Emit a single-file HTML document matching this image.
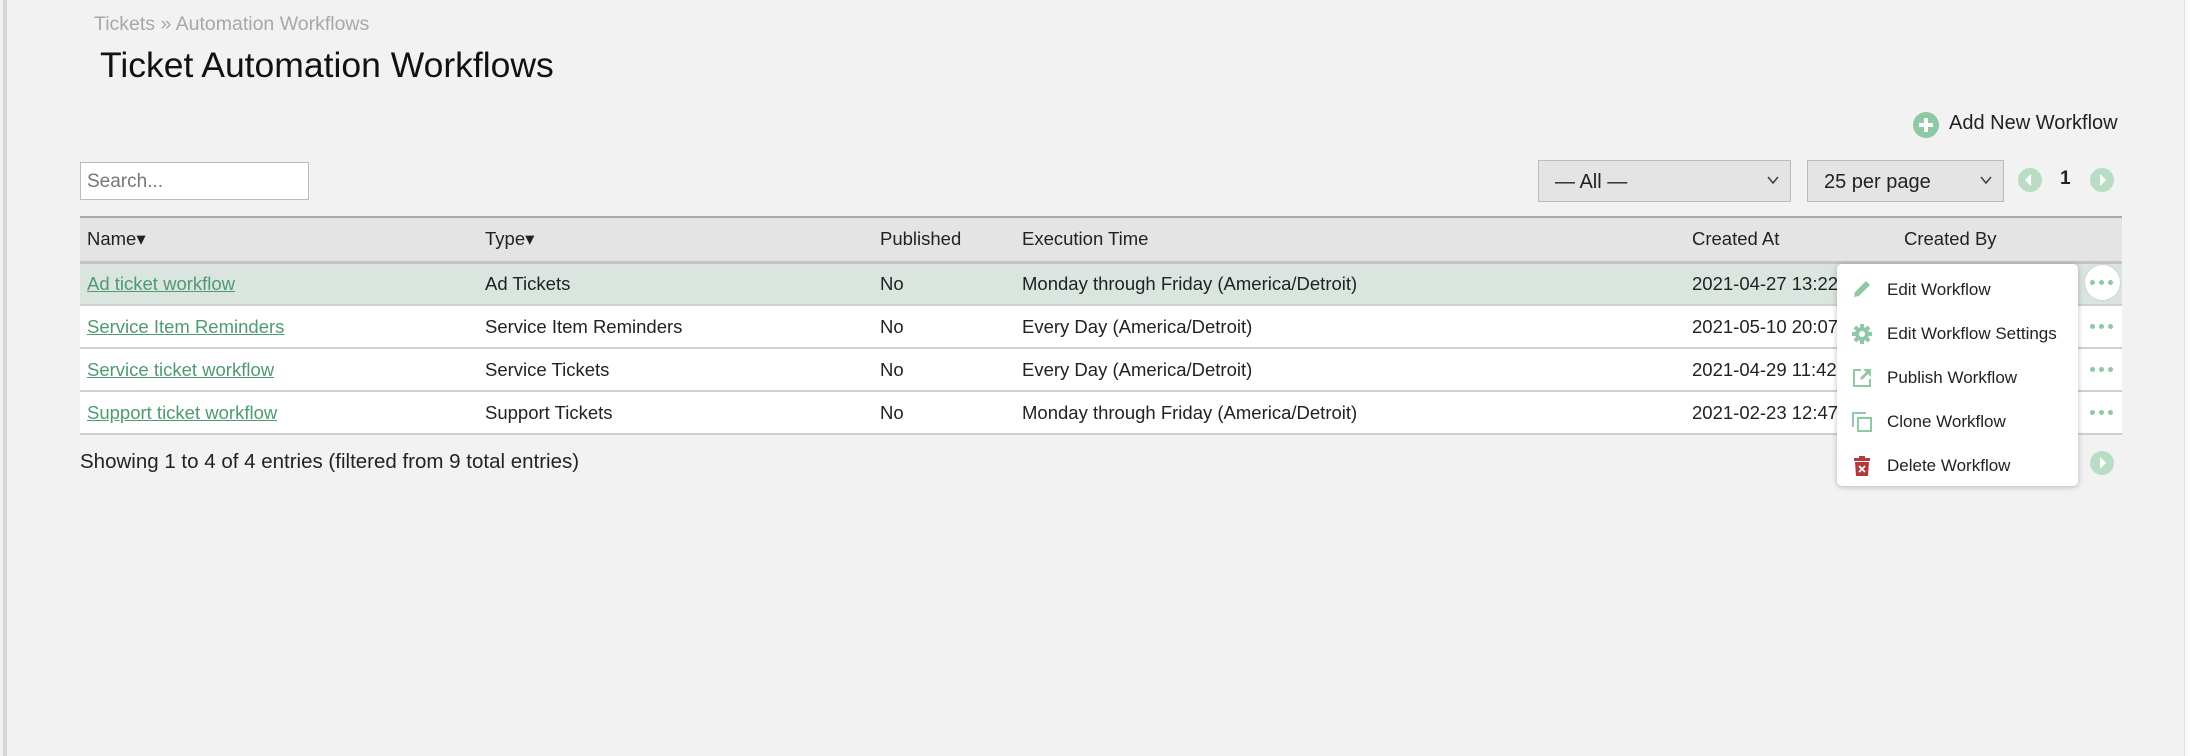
<!DOCTYPE html>
<html><head><meta charset="utf-8"><style>
*{margin:0;padding:0;box-sizing:border-box}
body{width:2190px;height:756px;background:#f2f2f2;font-family:"Liberation Sans",sans-serif;color:#222;position:relative;overflow:hidden}
.abs{position:absolute;white-space:nowrap}
.lstrip{left:3px;top:0;width:4px;height:756px;background:#d6d6d6}
.rstrip{left:2184px;top:0;width:6px;height:756px;background:#fafafa;border-left:1px solid #e0e0e0}
.bc{left:94px;top:13px;font-size:19.5px;color:#a8a8a8}
h1{position:absolute;left:100px;top:45px;font-size:35.5px;font-weight:normal;color:#111;white-space:nowrap}
.add{left:1949px;top:112px;font-size:20px;color:#222}
.circ{position:absolute;border-radius:50%;background:#8fc8a4}
.search{left:80px;top:162px;width:229px;height:38px;background:#fff;border:1px solid #bbb;font-size:19px;color:#777;padding:8px 6px}
.sel{top:160px;height:42px;background:#e4e4e4;border:1px solid #bcbcbc;font-size:20px;padding:10px 16px;color:#222}
.chev{position:absolute;right:10px;top:12px}
table{position:absolute;left:80px;top:216px;width:2042px;border-collapse:collapse;font-size:18.5px}
th{background:#e4e4e4;font-weight:normal;text-align:left;height:45px;border-top:2px solid #a9a9a9;border-bottom:3px solid #c4c4c4;padding:0}
td{height:43px;border-bottom:2px solid #cfcfcf;background:#fff;padding:0;overflow:hidden}
tr.hl td{background:#d9e5de}
a{color:#4f9a72;text-decoration:underline}
.menu{left:1837px;top:264px;width:241px;height:222px;background:#fff;border-radius:5px;box-shadow:0 1px 6px rgba(0,0,0,.25)}
.mi{position:absolute;left:50px;font-size:17px;color:#222;white-space:nowrap}
.ic{position:absolute;left:14px}
.dots{position:absolute;font-size:0}
.dots i{display:inline-block;width:5px;height:5px;border-radius:50%;background:#8fc8a4;margin-right:4px}
</style></head><body>
<div class="abs lstrip"></div><div class="abs rstrip"></div>
<div class="abs bc">Tickets » Automation Workflows</div>
<h1>Ticket Automation Workflows</h1>
<div class="circ" style="left:1913px;top:112px;width:26px;height:26px"></div>
<div class="abs" style="left:1919px;top:123px;width:14px;height:4px;background:#fff"></div>
<div class="abs" style="left:1924px;top:118px;width:4px;height:14px;background:#fff"></div>
<div class="abs add">Add New Workflow</div>
<div class="abs search">Search...</div>
<div class="abs sel" style="left:1538px;width:253px">— All —<svg class="chev" width="14" height="14" viewBox="0 0 14 14"><path d="M2 4l5 6 5-6" fill="none" stroke="#444" stroke-width="1.6"/></svg></div>
<div class="abs sel" style="left:1807px;width:197px">25 per page<svg class="chev" width="14" height="14" viewBox="0 0 14 14"><path d="M2 4l5 6 5-6" fill="none" stroke="#444" stroke-width="1.6"/></svg></div>
<div class="circ" style="left:2018px;top:168px;width:24px;height:24px;background:#b8dcc4"></div>
<div class="abs" style="left:2025px;top:174px;width:0;height:0;border-top:6px solid transparent;border-bottom:6px solid transparent;border-right:6px solid #fff"></div>
<div class="abs" style="left:2060px;top:168px;font-size:19px;font-weight:bold">1</div>
<div class="circ" style="left:2090px;top:168px;width:24px;height:24px;background:#b8dcc4"></div>
<div class="abs" style="left:2100px;top:174px;width:0;height:0;border-top:6px solid transparent;border-bottom:6px solid transparent;border-left:6px solid #fff"></div>
<table>
<tr><th style="width:405px;padding-left:7px">Name▾</th><th style="width:395px">Type▾</th><th style="width:142px">Published</th><th style="width:670px">Execution Time</th><th style="width:212px">Created At</th><th>Created By</th></tr>
<tr class="hl"><td style="padding-left:7px"><a>Ad ticket workflow</a></td><td>Ad Tickets</td><td>No</td><td>Monday through Friday (America/Detroit)</td><td>2021-04-27 13:22:</td><td></td></tr>
<tr><td style="padding-left:7px"><a>Service Item Reminders</a></td><td>Service Item Reminders</td><td>No</td><td>Every Day (America/Detroit)</td><td>2021-05-10 20:07:</td><td></td></tr>
<tr><td style="padding-left:7px"><a>Service ticket workflow</a></td><td>Service Tickets</td><td>No</td><td>Every Day (America/Detroit)</td><td>2021-04-29 11:42:</td><td></td></tr>
<tr><td style="padding-left:7px"><a>Support ticket workflow</a></td><td>Support Tickets</td><td>No</td><td>Monday through Friday (America/Detroit)</td><td>2021-02-23 12:47:</td><td></td></tr>
</table>
<div class="abs" style="left:80px;top:450px;font-size:20.5px">Showing 1 to 4 of 4 entries (filtered from 9 total entries)</div>
<div class="circ" style="left:2085px;top:265px;width:35px;height:35px;background:#fff;box-shadow:0 0 2px rgba(0,0,0,.15)"></div>
<div class="dots" style="left:2090px;top:280px"><i></i><i></i><i></i></div>
<div class="dots" style="left:2090px;top:324px"><i></i><i></i><i></i></div>
<div class="dots" style="left:2090px;top:367px"><i></i><i></i><i></i></div>
<div class="dots" style="left:2090px;top:410px"><i></i><i></i><i></i></div>
<div class="circ" style="left:2090px;top:451px;width:24px;height:24px;background:#b8dcc4"></div>
<div class="abs" style="left:2100px;top:457px;width:0;height:0;border-top:6px solid transparent;border-bottom:6px solid transparent;border-left:6px solid #fff"></div>
<div class="abs menu">
<svg class="ic" style="top:14px" width="22" height="22" viewBox="0 0 22 22"><path d="M3 19l1-5L15 3l4 4L8 18z" fill="#8fc8a4"/></svg>
<div class="mi" style="top:16px">Edit Workflow</div>
<svg class="ic" style="top:59px" width="22" height="22" viewBox="0 0 22 22"><g fill="#8fc8a4"><circle cx="11" cy="11" r="7"/><rect x="9" y="1" width="4" height="20"/><rect x="1" y="9" width="20" height="4"/><rect x="9" y="1" width="4" height="20" transform="rotate(45 11 11)"/><rect x="9" y="1" width="4" height="20" transform="rotate(-45 11 11)"/></g><circle cx="11" cy="11" r="3" fill="#fff"/></svg>
<div class="mi" style="top:60px">Edit Workflow Settings</div>
<svg class="ic" style="top:103px" width="22" height="22" viewBox="0 0 22 22"><path d="M10 3H3v16h16v-7" fill="none" stroke="#8fc8a4" stroke-width="2"/><path d="M12 2h8v8l-3-3-6 6-2-2 6-6z" fill="#8fc8a4"/></svg>
<div class="mi" style="top:104px">Publish Workflow</div>
<svg class="ic" style="top:147px" width="22" height="22" viewBox="0 0 22 22"><path d="M2 16V2h13" fill="none" stroke="#8fc8a4" stroke-width="2"/><rect x="7" y="7" width="13" height="13" fill="none" stroke="#8fc8a4" stroke-width="2"/></svg>
<div class="mi" style="top:148px">Clone Workflow</div>
<svg class="ic" style="top:191px" width="22" height="22" viewBox="0 0 22 22"><rect x="3" y="3" width="16" height="3" fill="#b33a3a"/><rect x="8" y="1" width="6" height="3" fill="#b33a3a"/><path d="M4 7h14l-1 14H5z" fill="#b33a3a"/><path d="M8 11l6 6M14 11l-6 6" stroke="#fff" stroke-width="1.6"/></svg>
<div class="mi" style="top:192px">Delete Workflow</div>
</div>
</body></html>
